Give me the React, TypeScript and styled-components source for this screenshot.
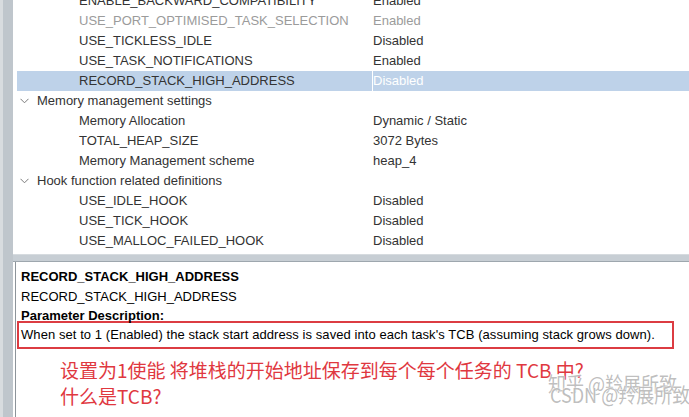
import React from "react";
import styled, { createGlobalStyle } from "styled-components";

const GlobalStyle = createGlobalStyle`
  html, body {
    margin: 0;
    padding: 0;
    width: 689px;
    height: 417px;
    overflow: hidden;
    background: #ffffff;
  }
  * { box-sizing: border-box; }
`;

const Screen = styled.div`
  position: relative;
  display: flex;
  width: 689px;
  height: 417px;
  overflow: hidden;
  font-family: "Liberation Sans", Arial, sans-serif;
  font-size: 13px;
  background: #ffffff;
`;

/* grey frame at the left edge of the config window */
const Strip = styled.div`
  width: 13px;
  flex: none;
  background: linear-gradient(to right, #d8dcdf 0 3px, #bfc6cc 3px 13px);
`;

const Main = styled.div`
  flex: 1;
  display: flex;
  flex-direction: column;
  min-width: 0;
`;

const Tree = styled.div`
  height: 254px;
  overflow: hidden;
  padding-left: 4px;
`;

const TreeList = styled.div`
  margin-top: -9px;
`;

const Row = styled.div<{ $selected?: boolean }>`
  display: grid;
  grid-template-columns: 355px 1fr;
  height: 20px;
  line-height: 20px;
  background: ${(p) => (p.$selected ? "#bed2e9" : "transparent")};
  white-space: nowrap;
`;

const Label = styled.div<{ $level: number; $muted?: boolean }>`
  display: flex;
  align-items: center;
  padding-left: ${(p) => (p.$level === 1 ? 3 : 62)}px;
  color: ${(p) => (p.$muted ? "#9b9b9b" : "#333333")};
  overflow: hidden;
`;

const Chevron = styled.svg`
  width: 9px;
  height: 6px;
  margin-right: 8px;
  flex: none;
`;

const Value = styled.div<{ $selected?: boolean; $muted?: boolean }>`
  border-left: 1px solid ${(p) => (p.$selected ? "#ffffff" : "transparent")};
  color: ${(p) => (p.$selected ? "#ffffff" : p.$muted ? "#9b9b9b" : "#333333")};
`;

const Splitter = styled.div`
  height: 8px;
  flex: none;
  background: #c7ced4;
  border-top: 1px solid #d6dbdf;
  border-bottom: 1px solid #9ea7ae;
`;

const Detail = styled.div`
  flex: 1;
  margin-left: 2px;
  border-left: 1px solid #8d949a;
  padding: 5px 15px 0 1px;
  color: #000000;
  line-height: 19.5px;
`;

const DetailLine = styled.div<{ $bold?: boolean }>`
  padding-left: 4px;
  font-weight: ${(p) => (p.$bold ? 700 : 400)};
  white-space: nowrap;
`;

const DescBox = styled.div`
  margin-top: -5px;
  height: 28px;
  border: 2px solid #dc3c42;
  padding-left: 2px;
  line-height: 24px;
  letter-spacing: 0.07px;
  white-space: nowrap;
`;

const Note = styled.div`
  padding: 8px 0 0 43px;
  color: #e0383f;
  font-family: "Noto Sans CJK SC", "Liberation Sans", sans-serif;
  font-size: 19px;
  line-height: 26px;
  white-space: nowrap;
`;

const Watermark = styled.span<{ $top: number; $left: number }>`
  position: absolute;
  top: ${(p) => p.$top}px;
  left: ${(p) => p.$left}px;
  font-family: "Noto Sans CJK SC", sans-serif;
  font-size: 18px;
  line-height: 20px;
  color: rgba(135, 135, 135, 0.55);
  text-shadow: 0 0 1px #ffffff, 0 0 2px #ffffff;
  transform: scale(1, 1.15);
  transform-origin: 0 0;
  white-space: nowrap;
  pointer-events: none;
`;

type Item = {
  label: string;
  value?: string;
  level: 1 | 2;
  muted?: boolean;
  selected?: boolean;
};

const ITEMS: Item[] = [
  { label: "ENABLE_BACKWARD_COMPATIBILITY", value: "Enabled", level: 2 },
  { label: "USE_PORT_OPTIMISED_TASK_SELECTION", value: "Enabled", level: 2, muted: true },
  { label: "USE_TICKLESS_IDLE", value: "Disabled", level: 2 },
  { label: "USE_TASK_NOTIFICATIONS", value: "Enabled", level: 2 },
  { label: "RECORD_STACK_HIGH_ADDRESS", value: "Disabled", level: 2, selected: true },
  { label: "Memory management settings", level: 1 },
  { label: "Memory Allocation", value: "Dynamic / Static", level: 2 },
  { label: "TOTAL_HEAP_SIZE", value: "3072 Bytes", level: 2 },
  { label: "Memory Management scheme", value: "heap_4", level: 2 },
  { label: "Hook function related definitions", level: 1 },
  { label: "USE_IDLE_HOOK", value: "Disabled", level: 2 },
  { label: "USE_TICK_HOOK", value: "Disabled", level: 2 },
  { label: "USE_MALLOC_FAILED_HOOK", value: "Disabled", level: 2 },
];

const ChevronDown = () => (
  <Chevron viewBox="0 0 9 6">
    <polyline points="0.5,0.8 4.5,4.8 8.5,0.8" fill="none" stroke="#7a7a7a" strokeWidth="1" />
  </Chevron>
);

const App = () => (
  <>
    <GlobalStyle />
    <Screen>
      <Strip />
      <Main>
        <Tree>
          <TreeList>
            {ITEMS.map((item) => (
              <Row key={item.label} $selected={item.selected}>
                <Label $level={item.level} $muted={item.muted}>
                  {item.level === 1 && <ChevronDown />}
                  {item.label}
                </Label>
                <Value $selected={item.selected} $muted={item.muted}>
                  {item.value}
                </Value>
              </Row>
            ))}
          </TreeList>
        </Tree>
        <Splitter />
        <Detail>
          <DetailLine $bold>RECORD_STACK_HIGH_ADDRESS</DetailLine>
          <DetailLine>RECORD_STACK_HIGH_ADDRESS</DetailLine>
          <DetailLine $bold>Parameter Description:</DetailLine>
          <DescBox>
            When set to 1 (Enabled) the stack start address is saved into each task's TCB
            (assuming stack grows down).
          </DescBox>
          <Note>
            <div>设置为1使能 将堆栈的开始地址保存到每个每个任务的 TCB 中?</div>
            <div>什么是TCB?</div>
          </Note>
        </Detail>
      </Main>
      <Watermark $top={371} $left={548}>知乎 @羚展所致</Watermark>
      <Watermark $top={382} $left={550}>CSDN @羚展所致</Watermark>
    </Screen>
  </>
);

export default App;
